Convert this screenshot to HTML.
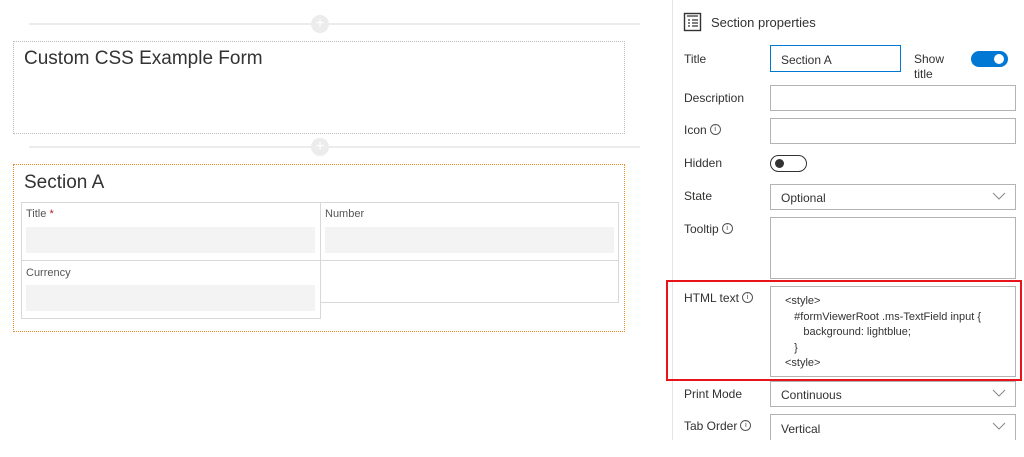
<!DOCTYPE html><html><head><style>
body{margin:0;width:1024px;height:457px;background:#fff;font-family:"Liberation Sans",sans-serif;color:#323130;position:relative;overflow:hidden}
.a{position:absolute;box-sizing:border-box}
.lbl{font-size:12px;color:#323130}
.inp{border:1px solid #b3b3b3;background:#fff;font-size:12px;padding-left:10px}
.chev{position:absolute;right:9px;top:6px}
.cell{border:1px solid #d8d8d8}
.fill{background:#f3f3f3}
.info{display:inline-block;width:9px;height:9px;border:1px solid #555;border-radius:50%;font-size:7px;line-height:9px;text-align:center;vertical-align:3px;margin-left:3px}
</style></head><body>
<div class="a" style="left:29px;top:23px;width:611px;height:2px;background:#ececec"></div>
<div class="a" style="left:311px;top:15px;width:18px;height:18px;border-radius:50%;background:#ececec;color:#fff;font-size:16px;line-height:18px;text-align:center">+</div>
<div class="a" style="left:13px;top:41px;width:612px;height:93px;border:1px dotted #bbb"></div>
<div class="a" style="left:24px;top:48px;font-size:19px;color:#333">Custom CSS Example Form</div>
<div class="a" style="left:29px;top:146px;width:611px;height:2px;background:#ececec"></div>
<div class="a" style="left:311px;top:138px;width:18px;height:18px;border-radius:50%;background:#ececec;color:#fff;font-size:16px;line-height:18px;text-align:center">+</div>
<div class="a" style="left:13px;top:164px;width:612px;height:168px;border:1px dotted #f08a24"></div>
<div class="a" style="left:24px;top:172px;font-size:19px;color:#333">Section A</div>
<div class="a cell" style="left:21px;top:202px;width:300px;height:59px"></div>
<div class="a cell" style="left:320px;top:202px;width:299px;height:59px"></div>
<div class="a cell" style="left:21px;top:260px;width:300px;height:59px"></div>
<div class="a cell" style="left:320px;top:260px;width:299px;height:43px"></div>
<div class="a lbl" style="left:26px;top:208px;font-size:11px;color:#555">Title <span style="color:#a4262c">*</span></div>
<div class="a lbl" style="left:325px;top:208px;font-size:11px;color:#555">Number</div>
<div class="a lbl" style="left:26px;top:267px;font-size:11px;color:#555">Currency</div>
<div class="a fill" style="left:26px;top:227px;width:289px;height:26px"></div>
<div class="a fill" style="left:325px;top:227px;width:289px;height:26px"></div>
<div class="a fill" style="left:26px;top:285px;width:289px;height:26px"></div>

<div class="a" style="left:672px;top:0;width:1px;height:440px;background:#e5e5e5"></div>
<svg class="a" style="left:683px;top:12px" width="20" height="20" viewBox="0 0 20 20"><rect x="1.5" y="1.5" width="16" height="17" fill="none" stroke="#333" stroke-width="1.4"/><path d="M4 4h11M5 8h2M9 8h6M5 11h2M9 11h6M5 14h2M9 14h6" stroke="#333" stroke-width="1.2"/></svg>
<div class="a" style="left:711px;top:15px;font-size:13px">Section properties</div>
<div class="a lbl" style="left:684px;top:52px">Title</div>
<div class="a inp" style="left:770px;top:45px;width:131px;height:27px;border:1px solid #0078d4;line-height:28px">Section A</div>
<div class="a lbl" style="left:914px;top:52px;line-height:15px">Show<br>title</div>
<div class="a" style="left:971px;top:51px;width:37px;height:16px;border-radius:8px;background:#0078d4"><div class="a" style="right:4px;top:3px;width:10px;height:10px;border-radius:50%;background:#fff"></div></div>
<div class="a lbl" style="left:684px;top:91px">Description</div>
<div class="a inp" style="left:770px;top:85px;width:246px;height:26px"></div>
<div class="a lbl" style="left:684px;top:123px">Icon<span class="info">i</span></div>
<div class="a inp" style="left:770px;top:118px;width:246px;height:26px"></div>
<div class="a lbl" style="left:684px;top:156px">Hidden</div>
<div class="a" style="left:770px;top:155px;width:37px;height:17px;border-radius:9px;border:1px solid #333"><div class="a" style="left:4px;top:3px;width:9px;height:9px;border-radius:50%;background:#333"></div></div>
<div class="a lbl" style="left:684px;top:189px">State</div>
<div class="a inp" style="left:770px;top:184px;width:246px;height:26px;line-height:26px">Optional<svg class="chev" width="14" height="10"><path d="M1 2l6 6 6-6" fill="none" stroke="#888"/></svg></div>
<div class="a lbl" style="left:684px;top:222px">Tooltip<span class="info">i</span></div>
<div class="a inp" style="left:770px;top:217px;width:246px;height:62px"></div>
<div class="a" style="left:666px;top:280px;width:356px;height:101px;border:2px solid #e8141c"></div>
<div class="a lbl" style="left:684px;top:291px">HTML text<span class="info">i</span></div>
<div class="a inp" style="left:770px;top:286px;width:246px;height:91px;padding:7px 0 0 14px;font-size:11px;line-height:15.5px;color:#333;white-space:pre">&lt;style&gt;
   #formViewerRoot .ms-TextField input {
      background: lightblue;
   }
&lt;style&gt;</div>
<div class="a lbl" style="left:684px;top:387px">Print Mode</div>
<div class="a inp" style="left:770px;top:381px;width:246px;height:26px;line-height:27px">Continuous<svg class="chev" width="14" height="10"><path d="M1 2l6 6 6-6" fill="none" stroke="#888"/></svg></div>
<div class="a lbl" style="left:684px;top:419px">Tab Order<span class="info">i</span></div>
<div class="a inp" style="left:770px;top:414px;width:246px;height:27px;line-height:28px;border-bottom:none">Vertical<svg class="chev" width="14" height="10"><path d="M1 2l6 6 6-6" fill="none" stroke="#888"/></svg></div>
<div class="a" style="left:660px;top:440px;width:364px;height:17px;background:#fff"></div>
</body></html>
